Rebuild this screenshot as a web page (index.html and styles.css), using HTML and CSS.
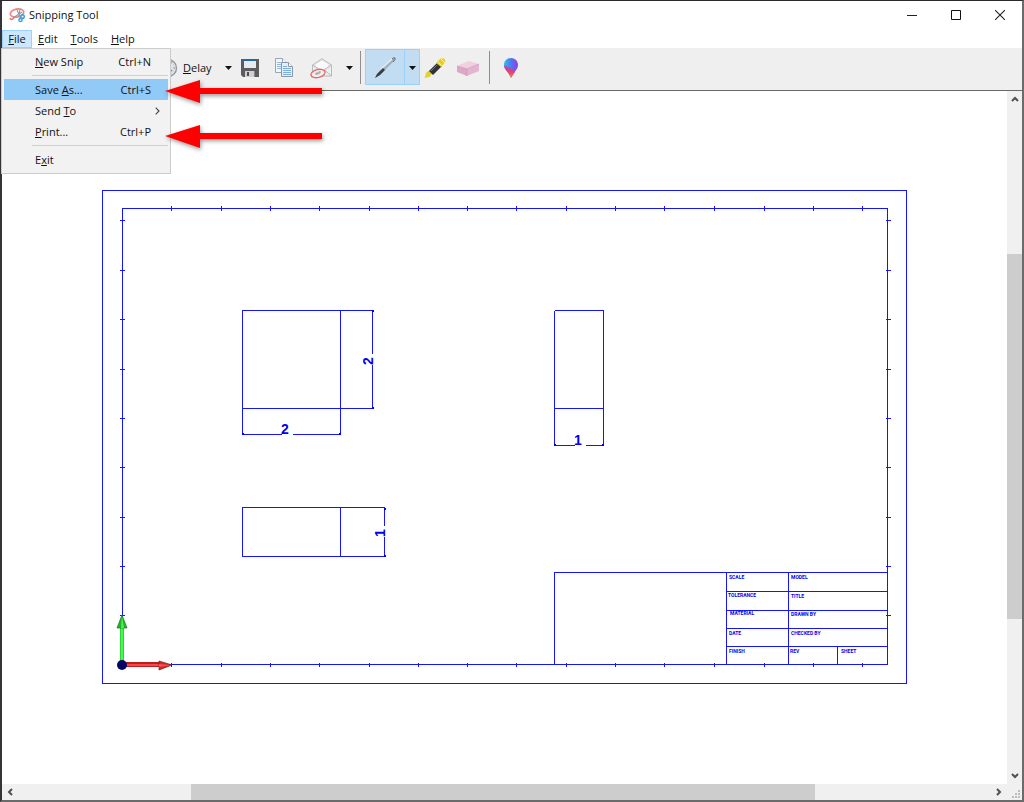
FILE: index.html
```html
<!DOCTYPE html>
<html lang="en">
<head>
<meta charset="utf-8">
<meta name="viewport" content="width=device-width, initial-scale=1">
<title>Snipping Tool</title>
<link rel="stylesheet" href="styles.css">
</head>
<body>
<div class="window">
  <header class="titlebar">
    <svg class="app-icon" width="18" height="16" viewBox="0 0 18 16" fill="none">
      <ellipse cx="8" cy="6" rx="6.8" ry="4" transform="rotate(-12 8 6)" stroke="#ee8580" stroke-width="1.7"/>
      <path d="M4 11l9-6M8 3l4 9M11 2l-1 7" stroke="#8e9aa5" stroke-width="1.2"/>
      <path d="M1 11q1 3 4 0" stroke="#e9726e" stroke-width="1.6"/>
      <circle cx="13.5" cy="9.5" r="1.8" stroke="#45a0d8" stroke-width="1.5"/>
      <circle cx="11.5" cy="13" r="1.6" stroke="#45a0d8" stroke-width="1.5"/>
    </svg>
    <h1 class="title">Snipping Tool</h1>
    <div class="window-controls">
      <button class="window-button" aria-label="Minimize"><svg width="10" height="10"><path d="M0 5.5h10" stroke="#222"/></svg></button>
      <button class="window-button" aria-label="Maximize"><svg width="10" height="10"><path d="M.5.5h9v9h-9z" fill="none" stroke="#111"/></svg></button>
      <button class="window-button" aria-label="Close"><svg width="10" height="10"><path d="M0 0l10 10M10 0L0 10" stroke="#222" stroke-width="1.1"/></svg></button>
    </div>
  </header>

  <nav class="menubar">
    <div class="menu-group">
      <button class="menu-title menu-title-open" aria-expanded="true"><u>F</u>ile</button>
      <div class="dropdown" role="menu">
        <button class="menu-item" role="menuitem"><span><u>N</u>ew Snip</span><span>Ctrl+N</span></button>
        <hr class="menu-rule">
        <button class="menu-item menu-item-active" role="menuitem"><span>Save <u>A</u>s...</span><span>Ctrl+S</span></button>
        <button class="menu-item menu-item-parent" role="menuitem"><span>Send <u>T</u>o</span><svg width="5" height="8" fill="none"><path d="M.7.7L4 4 .7 7.3" stroke="#444" stroke-width="1.1"/></svg></button>
        <button class="menu-item" role="menuitem"><span><u>P</u>rint...</span><span>Ctrl+P</span></button>
        <hr class="menu-rule">
        <button class="menu-item" role="menuitem"><span>E<u>x</u>it</span></button>
      </div>
    </div>
    <button class="menu-title"><u>E</u>dit</button>
    <button class="menu-title"><u>T</u>ools</button>
    <button class="menu-title"><u>H</u>elp</button>
  </nav>

  <div class="toolbar" role="toolbar" aria-label="Snip tools">
    <button class="tool tool-delay">
      <svg width="20" height="20" viewBox="0 0 20 20" fill="none"><circle cx="10" cy="10" r="8.5" fill="#e1e5e8" stroke="#929a9f" stroke-width="1.4"/><path d="M10 4v6l4 3M15.5 10h1.5M13 5l1-1" stroke="#68737a" stroke-width="1.2"/><circle cx="10" cy="10" r="6.5" stroke="#b8c0c4" stroke-dasharray="1 2"/></svg>
      <span><u>D</u>elay</span>
    </button>
    <button class="tool tool-arrow" aria-label="Delay options"><svg width="7" height="4"><path d="M0 0h7L3.500 4z" fill="#111"/></svg></button>
    <button class="tool tool-save" aria-label="Save Snip">
      <svg width="18" height="18" viewBox="0 0 18 18"><path d="M0 0h18v18H2l-2-2z" fill="#5c5c5e"/><path d="M3 1h12v8H3z" fill="#e4ebf1"/><path d="M3 0h12v2H3z" fill="#1b69b0"/><path d="M4 12h9v6H4z" fill="#d0d1d2"/><path d="M6 13h2v4H6z" fill="#4d4e50"/><path d="M13 12h1v6h-1z" fill="#888"/></svg>
    </button>
    <button class="tool tool-copy" aria-label="Copy">
      <svg width="19" height="20" viewBox="0 0 19 20"><path d="M.5.5h7l4 4v10H.5z" fill="#f2f6fa" stroke="#9ca5ad"/><path d="M7.500.5v4h4" fill="#fff" stroke="#9ca5ad"/><path d="M2 4.500h4M2 6.500h7M2 8.500h7M2 10.500h7" stroke="#92b9df"/><path d="M6.500 4.500h7l4 4v10h-11z" fill="#e2effb" stroke="#8a98a5"/><path d="M13.500 4.500v4h4" fill="#fff" stroke="#8a98a5"/><path d="M8 8.500h4M8 10.500h8M8 12.500h8M8 14.500h8M8 16.500h8" stroke="#7eaddc"/></svg>
    </button>
    <button class="tool tool-mail" aria-label="Send Snip">
      <svg width="23" height="21" viewBox="0 0 23 21" fill="none"><path d="M2.500 7L12 .7 21.500 7v11h-19z" fill="#eeeff0" stroke="#b7b9bb"/><path d="M5 6l7-4 7 4v4l-7 4-7-4z" fill="#fafafa" stroke="#d0d2d4" stroke-width=".7"/><path d="M2.500 7l9.500 6 9.500-6M2.500 18l7-6M21.500 18l-7-6" stroke="#b7b9bb"/><ellipse cx="8" cy="15.500" rx="7.200" ry="4" transform="rotate(-14 8 15.500)" fill="#f2eeee" stroke="#e96766" stroke-width="1.300"/><path d="M5 17q0-3 3-3 2-2 3 0-1 3-6 3z" fill="#aeb3b9"/></svg>
    </button>
    <button class="tool tool-arrow tool-mail-arrow" aria-label="Send options"><svg width="7" height="4"><path d="M0 0h7L3.500 4z" fill="#111"/></svg></button>
    <span class="tool-separator"></span>
    <div class="split-tool">
      <button class="tool tool-pen" aria-label="Pen" aria-pressed="true">
        <svg width="22" height="22" viewBox="0 0 22 22" fill="none"><path d="M1 21l2-4L18 2q2-2 3-1 1 1-1 3L6 18z" fill="#a3b0b9"/><path d="M7 12L18 2" stroke="#e7edf1" stroke-width="1.300"/><path d="M1 21l2-4 6-6 2 2-5 5z" fill="#393e42"/><path d="M18 2q2-2 3-1 1 1-2 4" stroke="#626b72"/></svg>
      </button>
      <button class="tool split-arrow" aria-label="Pen options"><svg width="7" height="4"><path d="M0 0h7L3.500 4z" fill="#111"/></svg></button>
    </div>
    <button class="tool tool-highlighter" aria-label="Highlighter">
      <svg width="22" height="21" viewBox="0 0 22 21"><path d="M.5 20l2-6 4-2 2 3-3 4z" fill="#e2d22d"/><path d="M5 13l9-9 4 4-9 9z" fill="#303234"/><path d="M12 5l4.500-4.500h4L21.500 4 17 9z" fill="#e4cf2d"/><path d="M14 4l4 4M17 1l4 4" stroke="#fff18b"/><path d="M7 13l6-6" stroke="#777"/></svg>
    </button>
    <button class="tool tool-eraser" aria-label="Eraser">
      <svg width="22" height="15" viewBox="0 0 22 15"><path d="M0 5l12-5 10 3-12 5z" fill="#f0cfe0"/><path d="M0 5l10 3v7L0 11z" fill="#dca8c5"/><path d="M10 8l12-5v7l-12 5z" fill="#e4b5cf"/><path d="M0 5l10 3 12-5M10 8v7" fill="none" stroke="#cc9ab7" stroke-width=".7"/></svg>
    </button>
    <span class="tool-separator"></span>
    <button class="tool tool-paint" aria-label="Edit with Paint 3D">
      <svg width="14" height="20" viewBox="0 0 14 20"><defs><linearGradient id="drop" x1="0" x2="1" y1="0" y2="0"><stop stop-color="#27c4f0"/><stop offset=".5" stop-color="#4f78ee"/><stop offset="1" stop-color="#9a3ae4"/></linearGradient><linearGradient id="tip" x1="0" x2="0" y1="0" y2="1"><stop stop-color="#b04ccc"/><stop offset=".5" stop-color="#e63d74"/><stop offset="1" stop-color="#e8883d"/></linearGradient></defs><path d="M7 0c4 0 7 3 7 7 0 5-5 7-7 13C5 14 0 12 0 7c0-4 3-7 7-7z" fill="url(#drop)"/><path d="M0 7q3 1 6 3l5 4-4 6C5 14 0 12 0 7z" fill="url(#tip)"/></svg>
    </button>
  </div>

  <main class="workspace">
    <div class="canvas">
      <svg class="drawing" viewBox="2 91 1005 693" role="img" aria-label="Engineering drawing">
        <g class="lines" transform="translate(.5 .5)">
          <path d="M102 190h804v493H102z"/>
          <path d="M122 208h765v456H122z"/>
          <path d="M171 205v5M221 205v5M270 205v5M319 205v5M369 205v5M418 205v5M467 205v5M516 205v5M566 205v5M615 205v5M664 205v5M714 205v5M764 205v5M813 205v5M862 205v5"/>
          <path d="M171 662v4M221 662v4M270 662v4M319 662v4M369 662v4M418 662v4M467 662v4M516 662v4M566 662v4M615 662v4M664 662v4M714 662v4M764 662v4M813 662v4M862 662v4"/>
          <path d="M119 220h5M119 270h5M119 319h5M119 369h5M119 418h5M119 467h5M119 517h5M119 566h5M119 615h5M885 220h5M885 270h5M885 319h5M885 369h5M885 418h5M885 467h5M885 517h5M885 566h5M885 615h5"/>
          <path d="M372 408H242V310h130M242 408v26h39M292 434h48M340 310v124M372 310v43M372 364v44"/>
          <path d="M384 507H242v49h142M340 507v49M384 507v18M384 536v20"/>
          <path d="M554 310h49v135h-18M554 310v135h20M554 408h49"/>
          <path d="M554 664v-92h333M726 572v92M788 572v92M837 646v18M726 591h161M726 610h161M726 628h161M726 646h161"/>
        </g>
        <path class="ends" d="M242 433h2v2h-2zM339 433h2v2h-2zM372 310h2v2h-2zM372 407h2v2h-2zM384 508h2v2h-2zM384 555h2v2h-2zM554 444h2v2h-2zM602 444h2v2h-2z"/>
        <g class="dimensions">
          <text x="281" y="434">2</text>
          <text transform="translate(373 365) rotate(-90)">2</text>
          <text transform="translate(385 537) rotate(-90)">1</text>
          <text x="574" y="445">1</text>
        </g>
        <g class="block-labels">
          <text x="729" y="579">SCALE</text><text x="791" y="579">MODEL</text>
          <text x="728" y="597">TOLERANCE</text><text x="791" y="598">TITLE</text>
          <text x="730" y="615">MATERIAL</text><text x="791" y="616">DRAWN BY</text>
          <text x="729" y="635">DATE</text><text x="791" y="635">CHECKED BY</text>
          <text x="729" y="653">FINISH</text><text x="790" y="653">REV</text><text x="841" y="653">SHEET</text>
        </g>
        <path d="M120 626h4v35h-4z" fill="#28d836"/><path d="M121 626h2v35h-2z" fill="#45fa4d"/><path d="M122 615l5 13h-10z" fill="#22b52d" stroke="#147519" stroke-width=".7"/><path d="M122 616l2 12h-3z" fill="#4af252"/>
        <path d="M125 662h35v5h-35z" fill="#b72020"/><path d="M125 664h35v2h-35z" fill="#ff4545"/><path d="M172 665l-13 5v-9z" fill="#ce2929" stroke="#7b1919" stroke-width=".7"/><path d="M171 665l-12 2v-3z" fill="#f75151"/>
        <circle cx="122" cy="665" r="5" fill="#050565"/>
      </svg>
    </div>
    <div class="scroll scroll-y">
      <button class="scroll-arrow" aria-label="Scroll up"><svg width="8" height="6"><path d="M1 5l3-3 3 3" class="chevron"/></svg></button>
      <div class="track-y"><div class="thumb-y"></div></div>
      <button class="scroll-arrow" aria-label="Scroll down"><svg width="8" height="6"><path d="M1 1l3 3 3-3" class="chevron"/></svg></button>
    </div>
    <div class="scroll scroll-x">
      <button class="scroll-arrow" aria-label="Scroll left"><svg width="6" height="8"><path d="M5 1L2 4l3 3" class="chevron"/></svg></button>
      <div class="track-x"><div class="thumb-x"></div></div>
      <button class="scroll-arrow" aria-label="Scroll right"><svg width="6" height="8"><path d="M1 1l3 3-3 3" class="chevron"/></svg></button>
    </div>
    <div class="grip"><svg width="8" height="8"><path d="M6 0h2v2H6zM3 3h2v2H3zM6 3h2v2H6zM0 6h2v2H0zM3 6h2v2H3zM6 6h2v2H6z" fill="#bdbdbd"/></svg></div>
  </main>
</div>

<svg class="callouts" width="168" height="80" viewBox="160 76 168 80" aria-hidden="true">
  <path d="M165 91l35-11v8h122v6H200v9z"/>
  <path d="M165 136l35-11v8h122v6H200v9z"/>
</svg>
</body>
</html>
```
FILE: styles.css
```css
* { box-sizing: border-box; }

body {
  margin: 0;
  color: #111;
  font: 11px/16px "Open Sans", "Noto Sans", sans-serif;
}

button {
  margin: 0;
  padding: 0;
  border: 0;
  background: none;
  color: inherit;
  font: inherit;
}

svg { display: block; flex: none; }

u { text-underline-offset: 1px; text-decoration-thickness: 1px; }

.window {
  display: flex;
  flex-direction: column;
  height: 100vh;
  border: 2px solid #6b6b6b;
  border-top: 1px solid #2c292a;
  border-left-color: #353337;
  background: #fff;
}

.titlebar { display: flex; align-items: center; height: 29px; padding: 0 0 2px 7px; }
.title { flex: 1; margin: 0 0 0 2px; font-size: 11px; font-weight: 400; }
.window-controls { display: flex; }
.window-button { display: grid; place-items: center; width: 44px; height: 27px; }

.menubar { display: flex; height: 18px; }
.menu-group { position: relative; }
.menu-title { height: 18px; padding: 0 7px 0 6px; line-height: 18px; }
.menu-title-open { width: 30px; padding: 0 5px; background: #cce8ff; box-shadow: inset 0 0 0 1px #99d1ff; }

.dropdown {
  position: absolute;
  z-index: 2;
  top: 100%;
  left: -1px;
  width: 170px;
  padding: 2px 2px 3px;
  border: 1px solid #ccc;
  background: #f2f2f2;
}
.menu-item {
  display: flex;
  align-items: center;
  justify-content: space-between;
  width: 100%;
  height: 21px;
  padding: 0 17px 0 31px;
}
.menu-item-active { background: #91c9f7; }
.menu-item-parent { padding-right: 8px; }
.menu-rule { height: 1px; margin: 3px 0 3px 28px; border: 0; background: #d0d0d0; }

.toolbar {
  display: flex;
  align-items: center;
  height: 43px;
  padding: 0 0 4px 156px;
  border-bottom: 1px solid #696969;
  background: #efefef;
}
.tool { display: flex; align-items: center; justify-content: center; height: 36px; padding-top: 2px; }
.tool-delay { gap: 5px; width: 59px; justify-content: flex-start; }
.tool-arrow { width: 22px; }
.tool-save { width: 22px; }
.tool-copy { width: 46px; }
.tool-mail { width: 28px; }
.tool-mail-arrow { margin-left: 3px; }
.tool-separator { width: 1px; height: 33px; background: #8e8e8e; }
.tool-separator + .split-tool { margin-left: 4px; }
.split-tool { display: flex; width: 55px; border: 1px solid #99d1ff; background: #c2ddf2; }
.tool-pen { width: 39px; height: 34px; border-right: 1px solid #99d1ff; }
.split-arrow { flex: 1; height: 34px; }
.tool-highlighter { width: 30px; }
.tool-eraser { width: 36px; }
.tool-eraser + .tool-separator { margin-left: 3px; }
.tool-paint { width: 41px; }

.workspace {
  display: grid;
  flex: 1;
  grid-template-columns: minmax(0, 1fr) 15px;
  grid-template-rows: minmax(0, 1fr) 16px;
  min-height: 0;
}
.canvas { min-width: 0; min-height: 0; }
.drawing { width: 100%; height: 100%; }
.lines { fill: none; stroke: #1414ff; stroke-width: 1; shape-rendering: crispEdges; }
.ends { fill: #0000f5; }
.dimensions { fill: #0000f5; font: bold 14px "Liberation Sans", sans-serif; }
.block-labels { fill: #0000f5; font: bold 5px Roboto, sans-serif; }

.scroll { display: flex; background: #f0f0f0; }
.scroll-y { flex-direction: column; }
.scroll-arrow { display: grid; place-items: center; width: 16px; height: 16px; }
.scroll-y .scroll-arrow { width: 15px; }
.track-y { display: grid; flex: 1; grid-template-rows: 147fr 365fr 149fr; }
.thumb-y { grid-row: 2; background: #cdcdcd; }
.track-x { display: grid; flex: 1; grid-template-columns: 173fr 624fr 176fr; }
.thumb-x { grid-column: 2; background: #cdcdcd; }
.chevron { fill: none; stroke: #505050; stroke-width: 2; }
.grip { display: flex; align-items: flex-end; justify-content: flex-end; padding: 2px; background: #f0f0f0; }

.callouts {
  position: absolute;
  z-index: 3;
  top: 76px;
  left: 160px;
  overflow: visible;
  fill: #f00;
  filter: drop-shadow(1px 2px 2px #0006);
  pointer-events: none;
}
```
